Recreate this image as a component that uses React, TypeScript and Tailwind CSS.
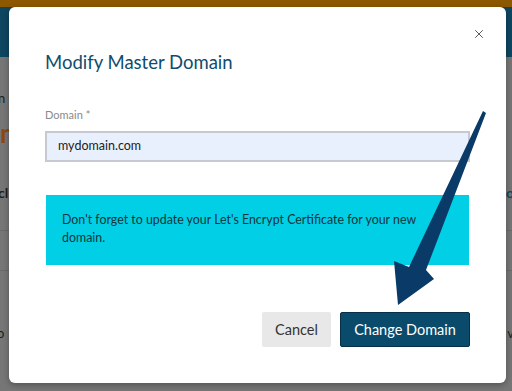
import { X } from 'lucide-react';

export default function App() {
  return (
    <div
      className="relative w-[512px] h-[391px] overflow-hidden bg-[#767676]"
      style={{ fontFamily: 'Lato, "Open Sans", sans-serif' }}
    >
      {/* Page behind the overlay */}
      <div className="flex flex-col">
        <div className="h-[7px] bg-[#8c5800]" />
        <div className="h-[50px] bg-[#0e4660]" />
        <div className="mt-[33px] h-[16px] leading-[16px] text-[13px] text-[#1d1d1d]">
          <span className="-ml-[2px]">n C</span>
        </div>
        <div className="mt-[14px] h-[26px] leading-[26px] text-[26px] font-bold text-[#8c4a10]">n</div>
        <div className="mt-[38px] h-[18px] leading-[18px] flex justify-between text-[14px] font-bold text-[#1d1d1d]">
          <span className="-ml-[2px]">cl</span>
          <span className="-mr-[2px] text-[#0e4660]">ıo</span>
        </div>
        <div className="mt-[28px] h-px bg-[#6a6a6a]" />
        <div className="mt-[39px] h-px bg-[#6a6a6a]" />
        <div className="mt-[54px] h-[16px] leading-[16px] flex justify-between text-[13px] text-[#1d1d1d]">
          <span className="-ml-[3px]">o</span>
          <span className="-mr-[2px]">v</span>
        </div>
      </div>

      {/* Modal */}
      <div className="absolute left-[9px] top-[7px] w-[497px] h-[376px] rounded-[6px] bg-white shadow-[0_2px_6px_rgba(0,0,0,0.3)] px-[36px]">
        <button className="absolute right-[20px] top-[20px] text-[#444]">
          <X className="w-[14px] h-[14px]" strokeWidth={1.5} />
        </button>

        <h2 className="pt-[43px] text-[18.5px] leading-[24px] text-[#0f4d6d]">Modify Master Domain</h2>

        <label className="block mt-[34px] text-[11px] leading-[14px] text-[#8a8a8a]">Domain *</label>
        <div className="mt-[9px] h-[31px] flex items-center border-2 border-[#c6c8d2] bg-[#e8f0fe] pl-[11px] text-[12.5px] text-[#222]">
          mydomain.com
        </div>

        <div className="mt-[33px] mx-[1px] h-[70px] bg-[#00cfe6] pl-[16px] pr-[30px] pt-[16px] text-[12.4px] leading-[18px] text-[#13343b]">
          Don't forget to update your Let's Encrypt Certificate for your new domain.
        </div>

        <div className="mt-[47px] flex justify-end gap-[9px]">
          <button className="h-[35px] w-[69px] rounded-[2px] bg-[#e8e8e8] text-[14.5px] text-[#333]">Cancel</button>
          <button className="h-[35px] w-[130px] rounded-[2px] border border-[#06304a] bg-[#0a4a6b] text-[14.5px] text-white">
            Change Domain
          </button>
        </div>
      </div>

      {/* Annotation arrow */}
      <svg className="absolute left-0 top-0" width="512" height="391" viewBox="0 0 512 391">
        <polygon
          points="483,111 486,113 426,270 434,279 398,305 394,261 409,267"
          fill="#0a3b68"
        />
      </svg>
    </div>
  );
}
